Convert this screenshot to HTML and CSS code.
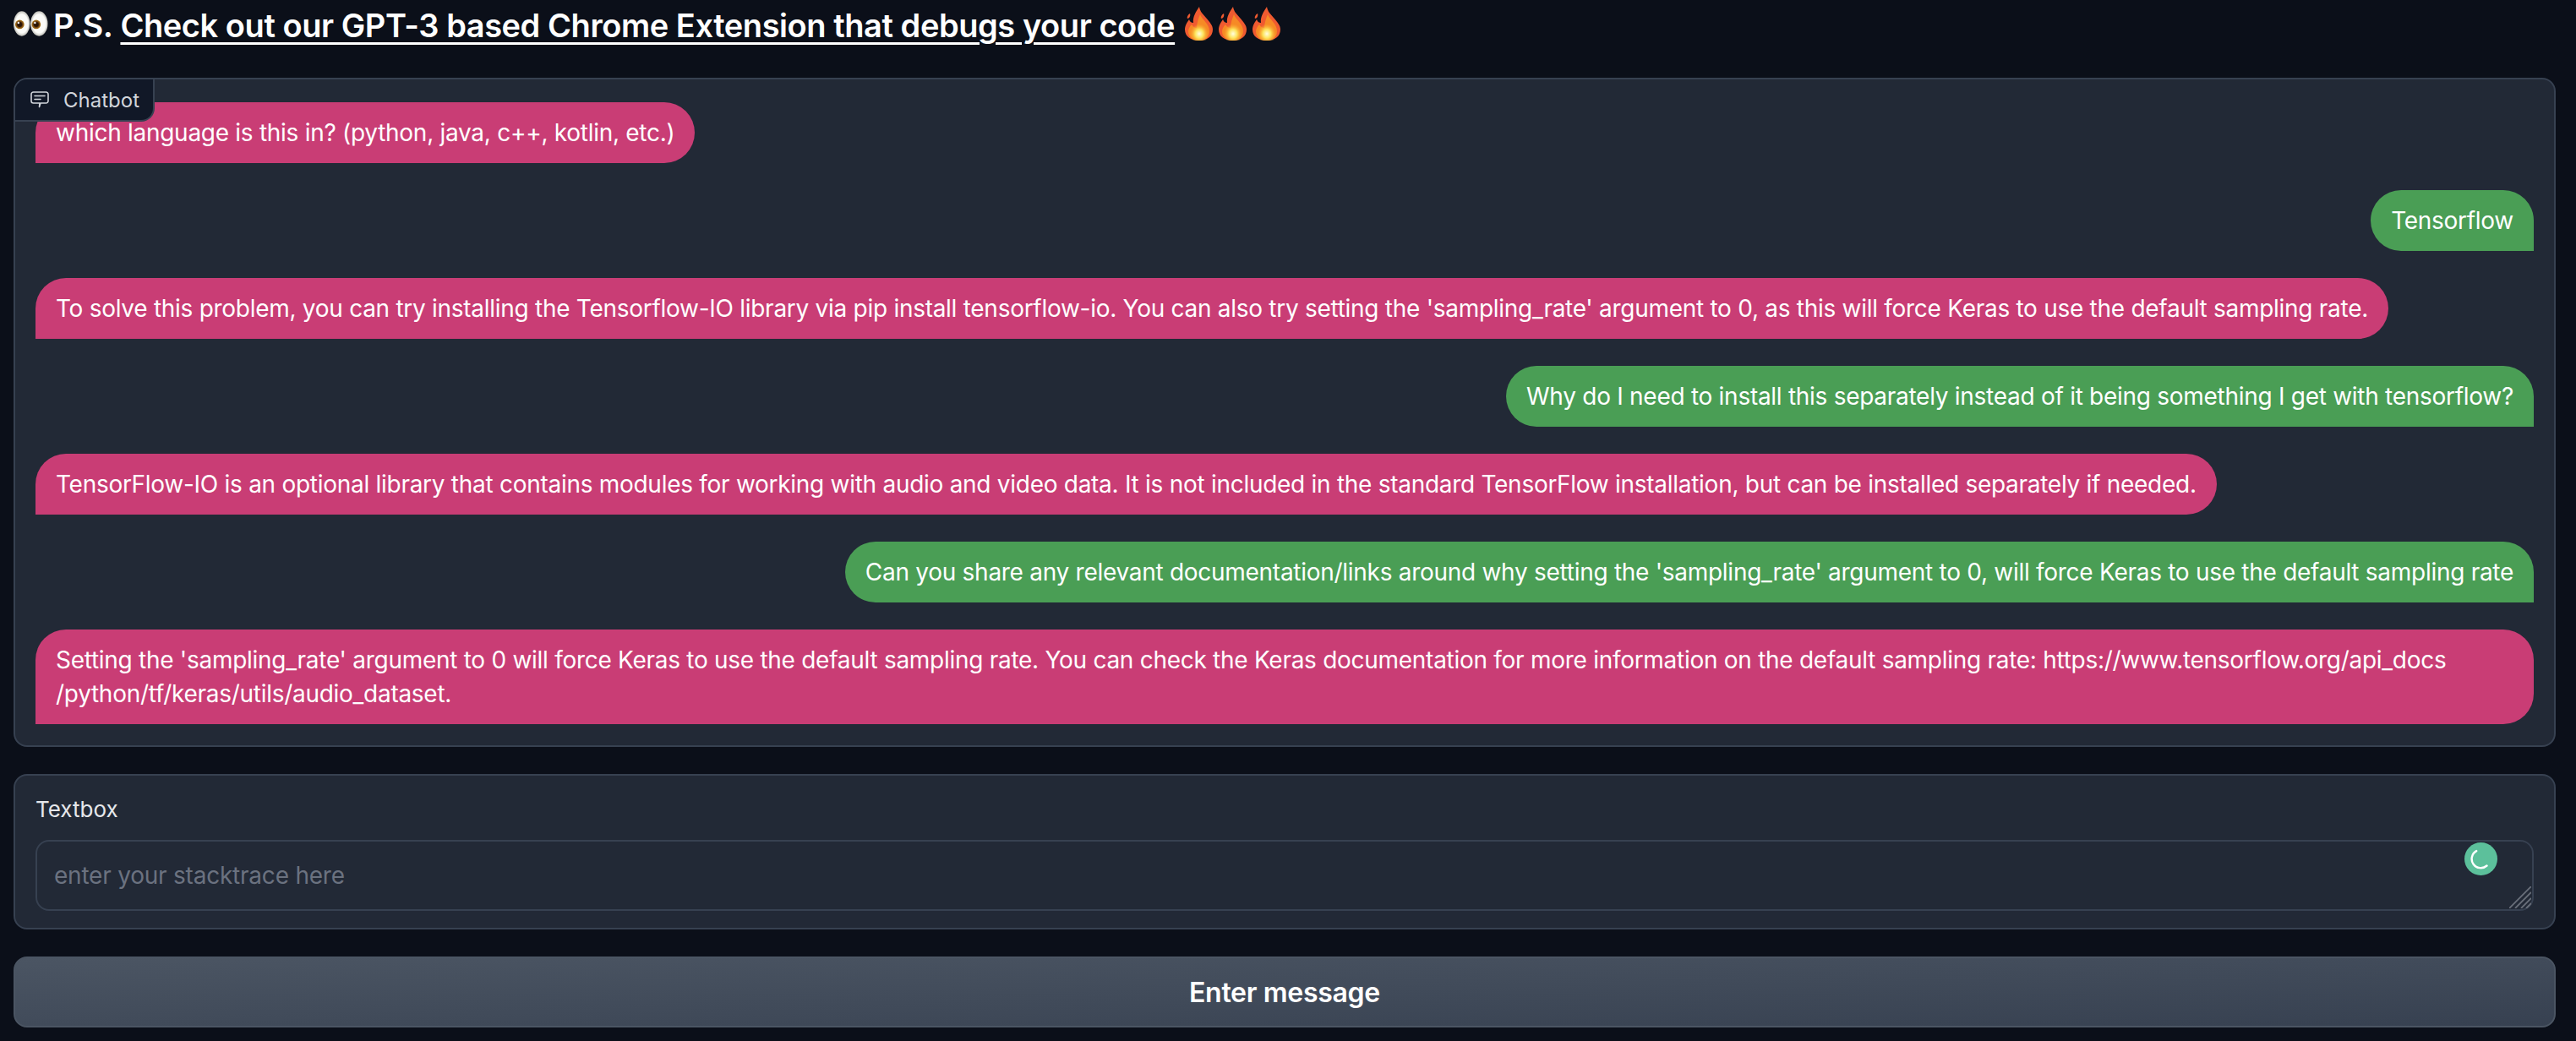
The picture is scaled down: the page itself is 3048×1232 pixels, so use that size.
FILE: index.html
```html
<!DOCTYPE html>
<html lang="en">
<head>
<meta charset="utf-8">
<title>Chatbot</title>
<link rel="stylesheet" href="styles.css">
</head>
<body>
<svg class="defs" width="0" height="0" aria-hidden="true">
  <defs>
    <radialGradient id="glow" cx="50%" cy="50%" r="50%"><stop offset="0" stop-color="#fffde0"/><stop offset=".45" stop-color="#fde35a"/><stop offset="1" stop-color="#f9a72b" stop-opacity="0"/></radialGradient>
    <radialGradient id="eyewhite" cx="50%" cy="50%" r="50%"><stop offset=".75" stop-color="#fbfbf8"/><stop offset="1" stop-color="#bdbcb5"/></radialGradient>
    <radialGradient id="iris" cx="50%" cy="50%" r="50%"><stop offset=".45" stop-color="#2b1505"/><stop offset=".7" stop-color="#7a4a12"/><stop offset="1" stop-color="#b5801f"/></radialGradient>
    <symbol id="flame" viewBox="0 0 33 40">
      <path d="M17 0C18 6 21 8 25 13C30 19 33 22 33 27C33 35 26 40 17 40C7 40 0 35 0 27C0 22 3 18 5 15C6 18 8 19 10 19C9 12 13 6 17 0Z" fill="#ef5a30"/>
      <path d="M6 8C7 11 5 14 3 14C2 12 4 9 6 8Z" fill="#ef5a30"/>
      <path d="M18 9C20 15 29 20 29 29C29 36 23 40 17 40C10 40 4 36 4 29C4 26 6 23 8 21C10 24 12 25 14 25C14 19 16 14 18 9Z" fill="#f68a25"/>
      <ellipse cx="17" cy="32" rx="11" ry="12" fill="url(#glow)"/>
    </symbol>
  </defs>
</svg>
<h1 class="headline">
  <svg class="eyes" viewBox="0 0 42 30"><ellipse cx="10" cy="15" rx="10" ry="15" fill="url(#eyewhite)"/><ellipse cx="31" cy="15" rx="10.500" ry="15" fill="url(#eyewhite)"/><circle cx="7.500" cy="16" r="5.500" fill="url(#iris)"/><circle cx="27.500" cy="16" r="5.500" fill="url(#iris)"/><circle cx="6" cy="14" r="1.200" fill="#fff"/><circle cx="26" cy="14" r="1.200" fill="#fff"/></svg>
  <span>P.S.</span>
  <a class="headline-link" href="#">Check out our GPT-3 based Chrome Extension that debugs your code</a>
  <span class="fires">
    <svg class="fire"><use href="#flame"/></svg>
    <svg class="fire"><use href="#flame"/></svg>
    <svg class="fire"><use href="#flame"/></svg>
  </span>
</h1>

<main class="stack">
  <section class="panel chat">
    <div class="tag">
      <svg class="tag-icon" viewBox="0 0 22 20" fill="none" stroke="currentColor" stroke-width="1.6" stroke-linecap="round" stroke-linejoin="round"><path d="M3.500 1h15A2.500 2.500 0 0 1 21 3.500v8a2.500 2.500 0 0 1-2.500 2.500H12l-1.500 4.500 .5-4.500H3.500A2.500 2.500 0 0 1 1 11.500v-8A2.500 2.500 0 0 1 3.500 1z"/><path d="M5 5.500h12M5 9.500h7"/></svg>
      <span>Chatbot</span>
    </div>
    <div class="messages">
      <div class="bubble bot">which language is this in? (python, java, c++, kotlin, etc.)</div>
      <div class="bubble user">Tensorflow</div>
      <div class="bubble bot">To solve this problem, you can try installing the Tensorflow-IO library via pip install tensorflow-io. You can also try setting the 'sampling_rate' argument to 0, as this will force Keras to use the default sampling rate.</div>
      <div class="bubble user">Why do I need to install this separately instead of it being something I get with tensorflow?</div>
      <div class="bubble bot">TensorFlow-IO is an optional library that contains modules for working with audio and video data. It is not included in the standard TensorFlow installation, but can be installed separately if needed.</div>
      <div class="bubble user">Can you share any relevant documentation/links around why setting the 'sampling_rate' argument to 0, will force Keras to use the default sampling rate</div>
      <div class="bubble bot wide">Setting the 'sampling_rate' argument to 0 will force Keras to use the default sampling rate. You can check the Keras documentation for more information on the default sampling rate: https://www.tensorflow.org/api_docs<br>/python/tf/keras/utils/audio_dataset.</div>
    </div>
  </section>

  <section class="panel input-panel">
    <label class="field-label" for="trace">Textbox</label>
    <div class="field">
      <textarea id="trace" class="field-input" placeholder="enter your stacktrace here"></textarea>
      <span class="grammar"><svg viewBox="0 0 40 40" fill="none"><path d="M14.500 10.400A11 11 0 1 0 27.200 28.200" stroke="#fff" stroke-width="2.500" stroke-linecap="round"/></svg></span>
      <svg class="grip" viewBox="0 0 26 26" stroke="#686e79" stroke-width="1.800"><path d="M0 26 26 0M7 26 26 7M14 26 26 14M20 26 26 20"/></svg>
    </div>
  </section>

  <button class="submit" type="button">Enter message</button>
</main>
</body>
</html>
```
FILE: styles.css
```css
* { box-sizing: border-box; }
html, body { height: 100%; }
body {
  margin: 0;
  padding: 0 24px 0 16px;
  background: #0b0f19;
  color: #fff;
  font-family: Inter, "Liberation Sans", sans-serif;
  letter-spacing: -0.28px;
  overflow: hidden;
}
.defs { position: absolute; }
.headline {
  display: flex;
  align-items: center;
  gap: 6px;
  height: 60px;
  margin: 0 0 32px;
  font-size: 38px;
  line-height: 56px;
  font-weight: 600;
  letter-spacing: -0.44px;
  white-space: nowrap;
}
.headline-link {
  margin-left: 3px;
  color: #fff;
  text-decoration: underline;
  text-decoration-thickness: 3px;
  text-underline-offset: 6px;
}
.eyes { display: block; width: 41px; height: 30px; flex: none; margin-top: -4px; }
.fire { display: block; width: 33px; height: 40px; flex: none; }
.fires { display: flex; gap: 7px; margin-left: 6px; margin-top: -4px; }
.stack { display: flex; flex-direction: column; gap: 32px; }
.panel {
  position: relative;
  background: #222936;
  border: 2px solid #374151;
  border-radius: 16px;
}
.chat { height: 792px; padding: 27px 24px 24px; }
.tag {
  position: absolute;
  left: 0;
  top: 0;
  display: flex;
  align-items: center;
  gap: 17px;
  height: 50px;
  padding: 0 16px 0 18px;
  background: #111827;
  color: #d1d5db;
  font-size: 24px;
  letter-spacing: 0;
  border-right: 2px solid #374151;
  border-bottom: 2px solid #374151;
  border-radius: 14px 0 16px 0;
  z-index: 1;
}
.tag-icon { width: 22px; height: 20px; }
.messages { display: flex; flex-direction: column; align-items: flex-start; gap: 32px; }
.bubble {
  padding: 16px 24px;
  font-size: 28px;
  line-height: 40px;
  border-radius: 36px;
}
.bot { background: #c93d75; border-bottom-left-radius: 0; }
.user { align-self: flex-end; background: #4a9e55; border-bottom-right-radius: 0; }
.wide { align-self: stretch; }
.input-panel { height: 184px; padding: 20px 24px 20px; }
.field-label { display: block; height: 40px; font-size: 26px; line-height: 40px; letter-spacing: 0; color: #e5e7eb; margin-bottom: 16px; }
.field { position: relative; }
.field-input {
  display: block;
  width: 100%;
  height: 84px;
  padding: 20px;
  background: #222936;
  border: 2px solid #374151;
  border-radius: 16px;
  color: #fff;
  font: 28px/40px Inter, "Liberation Sans", sans-serif;
  letter-spacing: -0.22px;
  outline: none;
  resize: none;
}
.field-input::placeholder { color: #6b7280; opacity: 1; }
.grammar {
  position: absolute;
  right: 43px;
  top: 3px;
  width: 39px;
  height: 39px;
  border-radius: 50%;
  background: #5cc09b;
}
.grammar svg { display: block; width: 100%; height: 100%; }
.grip { position: absolute; right: 3px; bottom: 3px; width: 26px; height: 26px; }
.submit {
  display: block;
  width: 100%;
  height: 84px;
  background: linear-gradient(to bottom right, #4b5563, #374151);
  border: 2px solid #4b5563;
  border-radius: 16px;
  color: #fff;
  font: 600 32px Inter, "Liberation Sans", sans-serif;
  letter-spacing: -0.3px;
}
```
